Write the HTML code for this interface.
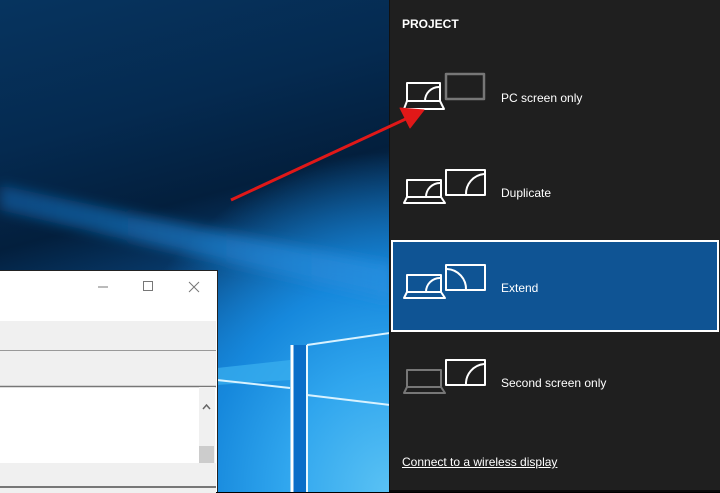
<!DOCTYPE html>
<html><head><meta charset="utf-8"><style>
*{margin:0;padding:0;box-sizing:border-box}
body{width:720px;height:492px;overflow:hidden;position:relative;font-family:"Liberation Sans",sans-serif;background:#000}
.desk{position:absolute;left:0;top:0;width:390px;height:492px;background:radial-gradient(ellipse 300px 340px at 100% 100%,#5ac2f4 0%,#30a6ee 35%,#1688dc 62%,rgba(16,110,200,0) 100%),linear-gradient(165deg,#06345f 0%,#052a50 25%,#031f3d 42%,#0a4c8a 62%,#0f72c8 80%,#1a8fe0 100%)}
.panel{position:absolute;left:389px;top:0;width:331px;height:492px;background:#1f1f1f;border-left:1px solid #111;border-bottom:2px solid #0a0a0a}
.h{position:absolute;left:12px;top:17px;color:#fff;font-weight:bold;font-size:12px}
.lab{position:absolute;left:111px;color:#fff;font-size:12px}
.sel{position:absolute;left:1px;top:240px;width:328px;height:92px;background:#0f5494;border:2px solid #fff}
.link{position:absolute;left:12px;top:455px;color:#fff;font-size:12px;text-decoration:underline}
.win{position:absolute;left:0;top:270px;width:218px;height:222px;background:#fff;border-right:1px solid #222;border-top:1px solid #222}
</style></head><body>
<div class="desk">
<svg width="390" height="492" style="position:absolute;left:0;top:0">
<defs>
<linearGradient id="b" x1="0" y1="0" x2="1" y2="0"><stop offset="0" stop-color="#1270c0" stop-opacity=".5"/><stop offset="1" stop-color="#2a90e0" stop-opacity=".8"/></linearGradient>
<filter id="bl"><feGaussianBlur stdDeviation="6"/></filter>
</defs>
<path d="M0 185 Q180 225 390 265 L390 300 Q150 245 0 210Z" fill="url(#b)" filter="url(#bl)"/>
<path d="M217 385 L290 380 L290 360 L217 368Z" fill="#3ab0f0" opacity=".7"/>
<line x1="217" y1="380" x2="290" y2="388" stroke="#d8f2ff" stroke-width="2"/>
<line x1="307" y1="395" x2="390" y2="405" stroke="#d8f2ff" stroke-width="2"/>
<rect x="293" y="345" width="13" height="147" fill="#0a6ec8"/>
<line x1="292" y1="345" x2="292" y2="492" stroke="#fff" stroke-width="3"/>
<line x1="307" y1="345" x2="307" y2="492" stroke="#e8f8ff" stroke-width="2"/>
<line x1="307" y1="345" x2="390" y2="333" stroke="#d8f2ff" stroke-width="2"/>
</svg>
</div>
<div class="win">
<svg width="218" height="222" style="position:absolute;left:0;top:0">
<line x1="98" y1="16" x2="108" y2="16" stroke="#777"/>
<rect x="143.5" y="10.5" width="9" height="9" fill="none" stroke="#777"/>
<path d="M189 11 L199 21 M199 11 L189 21" stroke="#777"/>
<rect x="0" y="50" width="216" height="30" fill="#f0f0f0"/>
<line x1="0" y1="79.5" x2="216" y2="79.5" stroke="#999"/>
<rect x="0" y="80" width="216" height="35" fill="#f0f0f0"/>
<line x1="0" y1="115.5" x2="216" y2="115.5" stroke="#777" stroke-width="1.5"/>
<rect x="199" y="116" width="16" height="103" fill="#f0f0f0"/>
<rect x="199" y="175" width="15" height="17" fill="#ccc"/>
<path d="M203 138 L206.5 134 L210 138 M203 196 L206.5 200 L210 196" stroke="#666" stroke-width="1.5" fill="none"/>
<rect x="0" y="192" width="216" height="30" fill="#f0f0f0"/>
<rect x="0" y="215" width="216" height="2" fill="#777"/>
</svg>
</div>
<div class="panel">
<div class="h">PROJECT</div>
<div class="sel"></div>
<div class="lab" style="top:91px">PC screen only</div>
<div class="lab" style="top:186px">Duplicate</div>
<div class="lab" style="top:281px">Extend</div>
<div class="lab" style="top:376px">Second screen only</div>
<div class="link">Connect to a wireless display</div>
</div>
<svg width="720" height="492" style="position:absolute;left:0;top:0" fill="none" stroke-width="2" stroke-linejoin="round">
<g transform="translate(0,98)">
<rect x="407" y="-15" width="33" height="18" stroke="#fff"/><path d="M404 11 L407 3 L440 3 L444 11Z" stroke="#fff"/><path d="M425 3 A14 14 0 0 1 439 -11" stroke="#fff"/>
<rect x="446" y="-24" width="38" height="25" stroke="#777" stroke-width="2.5"/>
</g>
<g transform="translate(0,193)">
<rect x="407" y="-13" width="34" height="17" stroke="#fff"/><path d="M404 10 L407 4 L441 4 L445 10Z" stroke="#fff"/><path d="M426 4 A14 14 0 0 1 440 -10" stroke="#fff"/>
<rect x="446" y="-23" width="39" height="25" stroke="#fff"/><path d="M466 2 A20 20 0 0 1 484 -19" stroke="#fff"/>
</g>
<g transform="translate(0,288)">
<rect x="407" y="-13" width="34" height="17" stroke="#fff"/><path d="M404 10 L407 4 L441 4 L445 10Z" stroke="#fff"/><path d="M426 4 A14 14 0 0 1 440 -10" stroke="#fff"/>
<rect x="446" y="-23" width="39" height="25" stroke="#fff"/><path d="M447 -19 A20 20 0 0 1 466 2" stroke="#fff"/>
</g>
<g transform="translate(0,383)">
<rect x="407" y="-13" width="34" height="17" stroke="#777"/><path d="M404 10 L407 4 L441 4 L445 10Z" stroke="#777"/>
<rect x="446" y="-23" width="39" height="25" stroke="#fff"/><path d="M466 2 A20 20 0 0 1 484 -19" stroke="#fff"/>
</g>
<line x1="231" y1="200" x2="410" y2="117" stroke="#e01818" stroke-width="3"/>
<path d="M424 110 L400 108 L410 128Z" fill="#e01818" stroke="#e01818" stroke-width="1"/>
</svg>
</body></html>
